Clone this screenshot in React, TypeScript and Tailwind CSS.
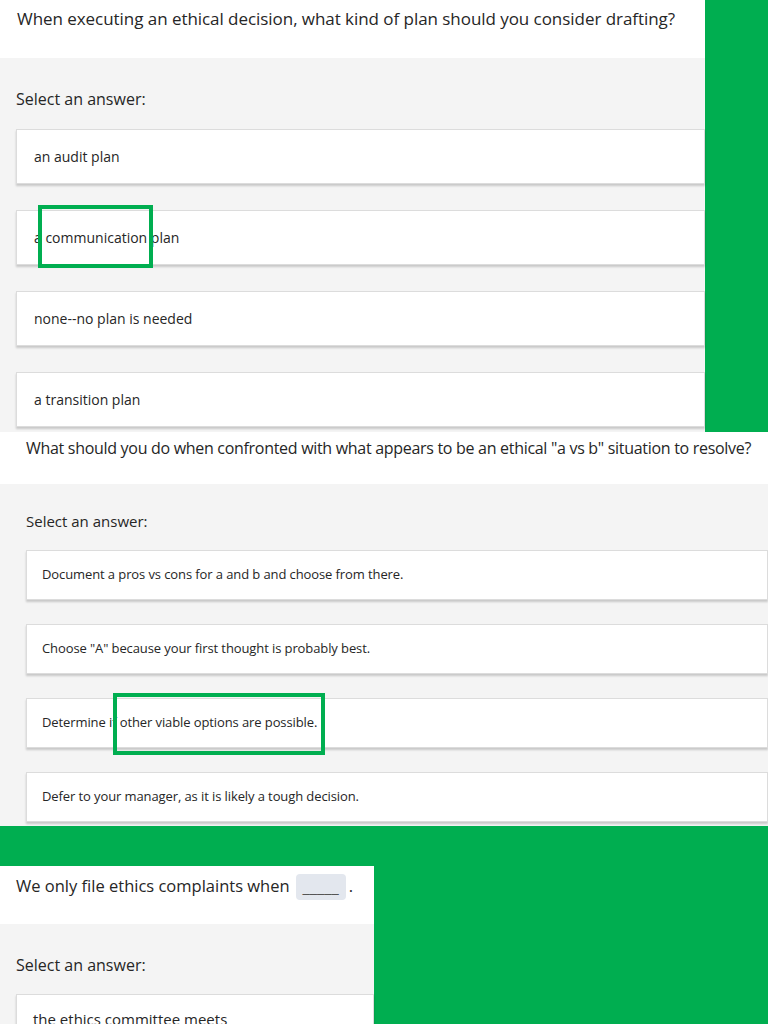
import React from "react";

const font = { fontFamily: '"Open Sans", "Noto Sans", sans-serif' };

const Card = ({ text, cls }: any) => {
  return (
    <div className={`flex items-center bg-white border border-[#dcdcdc] shadow-[0_2px_2px_rgba(0,0,0,0.18)] ${cls}`}>
      {text}
    </div>
  );
};

const Highlight = ({ cls }: any) => {
  return <div className={`absolute border-[4px] border-[#00ae50] ${cls}`}></div>;
};

export default function App() {
  const q1 = ["an audit plan", "a communication plan", "none--no plan is needed", "a transition plan"];
  const q2 = [
    "Document a pros vs cons for a and b and choose from there.",
    'Choose "A" because your first thought is probably best.',
    "Determine if other viable options are possible.",
    "Defer to your manager, as it is likely a tough decision.",
  ];

  return (
    <div className="w-[768px] h-[1024px] overflow-hidden bg-[#00ae50] text-[#262626]" style={font}>
      {/* first screenshot */}
      <div className="flex h-[432px]">
        <div className="relative w-[705px] flex flex-col">
          <div className="h-[58px] shrink-0 bg-white pl-[17px] pt-[7px] text-[17px] leading-[24px] tracking-[-0.05px]">
            When executing an ethical decision, what kind of plan should you consider drafting?
          </div>
          <div className="flex-1 bg-[#f4f4f4] pl-[16px] pt-[30px]">
            <div className="text-[16px] leading-[22px]">Select an answer:</div>
            <div className="mt-[19px] flex flex-col gap-[26px]">
              {q1.map((t) => (
                <Card key={t} text={t} cls="h-[55px] pl-[17px] text-[14px]" />
              ))}
            </div>
          </div>
          <Highlight cls="left-[38px] top-[205px] w-[115px] h-[63px]" />
        </div>
        <div className="flex-1"></div>
      </div>

      {/* second screenshot */}
      <div className="relative h-[394px] flex flex-col">
        <div className="h-[52px] shrink-0 bg-white pl-[26px] pt-[5px] text-[16px] leading-[22px] tracking-[-0.3px]">
          What should you do when confronted with what appears to be an ethical "a vs b" situation to resolve?
        </div>
        <div className="flex-1 bg-[#f4f4f4] pl-[26px] pt-[27px]">
          <div className="text-[15px] leading-[20px]">Select an answer:</div>
          <div className="mt-[19px] flex flex-col gap-[24px]">
            {q2.map((t) => (
              <Card key={t} text={t} cls="h-[50px] pl-[15px] text-[13px] tracking-[-0.1px]" />
            ))}
          </div>
        </div>
        <Highlight cls="left-[113px] top-[261px] w-[212px] h-[62px]" />
      </div>

      <div className="h-[40px]"></div>

      {/* third screenshot */}
      <div className="w-[374px] h-[158px] flex flex-col">
        <div className="h-[58px] shrink-0 bg-white pl-[16px] pt-[8px] text-[16.5px] leading-[24px] flex items-start">
          <span>We only file ethics complaints when</span>
          <span className="ml-[6px] px-[7px] rounded-[4px] bg-[#e3e7ee] text-[#555] leading-[26px]">_____</span>
          <span className="ml-[3px]">.</span>
        </div>
        <div className="flex-1 bg-[#f4f4f4] pl-[16px] pt-[30px]">
          <div className="text-[16px] leading-[22px]">Select an answer:</div>
          <div className="mt-[18px]">
            <Card text="the ethics committee meets" cls="h-[55px] pl-[16px] items-start pt-[14px] text-[15px] leading-[20px]" />
          </div>
        </div>
      </div>
    </div>
  );
}
